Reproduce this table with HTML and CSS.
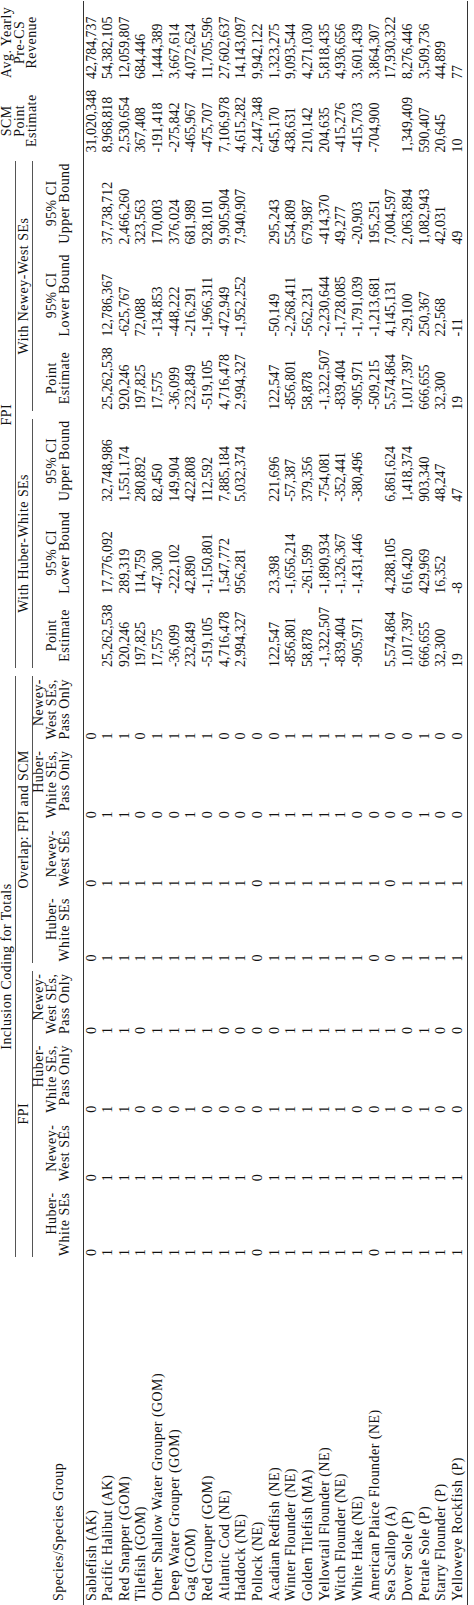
FILE: index.html
```html
<!DOCTYPE html>
<html lang="en">
<head>
<meta charset="utf-8">
<title>Inclusion coding table</title>
<link rel="stylesheet" href="styles.css">
</head>
<body>
<div class="page">
<div class="tbl">
  <div class="head">
    <div class="sub sp tl">Species/Species Group</div>
    <div class="g1 c-incl tl"><span class="tx">Inclusion Coding for Totals</span><i class="cm"></i></div>
    <div class="g1 c-fpi1 tl"><span class="tx">FPI</span><i class="cm"></i></div>
    <div class="top c-scm tl">SCM<br>Point<br>Estimate</div>
    <div class="top c-rev tl">Avg. Yearly<br>Pre-CS<br>Revenue</div>
    <div class="g2 c-fpi2 tl"><span class="tx">FPI</span><i class="cm"></i></div>
    <div class="g2 c-ovl tl"><span class="tx">Overlap: FPI and SCM</span><i class="cm"></i></div>
    <div class="g2 c-hw tl"><span class="tx">With Huber-White SEs</span><i class="cm"></i></div>
    <div class="g2 c-nw tl"><span class="tx">With Newey-West SEs</span><i class="cm"></i></div>
    <div class="sub code tl"><span class="ln">Huber-<br>White SEs</span></div>
    <div class="sub code tl"><span class="ln">Newey-<br>West SEs</span></div>
    <div class="sub code tl"><span class="ln">Huber-<br>White SEs,<br>Pass Only</span></div>
    <div class="sub code tl"><span class="ln">Newey-<br>West SEs,<br>Pass Only</span></div>
    <div class="sub code tl"><span class="ln">Huber-<br>White SEs</span></div>
    <div class="sub code tl"><span class="ln">Newey-<br>West SEs</span></div>
    <div class="sub code tl"><span class="ln">Huber-<br>White SEs,<br>Pass Only</span></div>
    <div class="sub code tl"><span class="ln">Newey-<br>West SEs,<br>Pass Only</span></div>
    <div class="sub num tl">Point<br>Estimate</div>
    <div class="sub num tl">95% CI<br>Lower Bound</div>
    <div class="sub num tl">95% CI<br>Upper Bound</div>
    <div class="sub num tl">Point<br>Estimate</div>
    <div class="sub num tl">95% CI<br>Lower Bound</div>
    <div class="sub num tl">95% CI<br>Upper Bound</div>
  </div>
  <div class="midrule"></div>
  <div class="body">
    <div class="row"><span class="tl">Sablefish (AK)</span><span>0</span><span>0</span><span>0</span><span>0</span><span>0</span><span>0</span><span>0</span><span>0</span><span></span><span></span><span></span><span></span><span></span><span></span><span>31,020,348</span><span>42,784,737</span></div>
    <div class="row"><span class="tl">Pacific Halibut (AK)</span><span>1</span><span>1</span><span>1</span><span>1</span><span>1</span><span>1</span><span>1</span><span>1</span><span>25,262,538</span><span>17,776,092</span><span>32,748,986</span><span>25,262,538</span><span>12,786,367</span><span>37,738,712</span><span>8,968,818</span><span>54,382,105</span></div>
    <div class="row"><span class="tl">Red Snapper (GOM)</span><span>1</span><span>1</span><span>1</span><span>1</span><span>1</span><span>1</span><span>1</span><span>1</span><span>920,246</span><span>289,319</span><span>1,551,174</span><span>920,246</span><span>-625,767</span><span>2,466,260</span><span>2,530,654</span><span>12,059,807</span></div>
    <div class="row"><span class="tl">Tilefish (GOM)</span><span>1</span><span>1</span><span>0</span><span>0</span><span>1</span><span>1</span><span>0</span><span>0</span><span>197,825</span><span>114,759</span><span>280,892</span><span>197,825</span><span>72,088</span><span>323,563</span><span>367,408</span><span>684,446</span></div>
    <div class="row"><span class="tl">Other Shallow Water Grouper (GOM)</span><span>1</span><span>1</span><span>0</span><span>1</span><span>1</span><span>1</span><span>0</span><span>1</span><span>17,575</span><span>-47,300</span><span>82,450</span><span>17,575</span><span>-134,853</span><span>170,003</span><span>-191,418</span><span>1,444,389</span></div>
    <div class="row"><span class="tl">Deep Water Grouper (GOM)</span><span>1</span><span>1</span><span>0</span><span>1</span><span>1</span><span>1</span><span>0</span><span>1</span><span>-36,099</span><span>-222,102</span><span>149,904</span><span>-36,099</span><span>-448,222</span><span>376,024</span><span>-275,842</span><span>3,667,614</span></div>
    <div class="row"><span class="tl">Gag (GOM)</span><span>1</span><span>1</span><span>1</span><span>1</span><span>1</span><span>1</span><span>1</span><span>1</span><span>232,849</span><span>42,890</span><span>422,808</span><span>232,849</span><span>-216,291</span><span>681,989</span><span>-465,967</span><span>4,072,624</span></div>
    <div class="row"><span class="tl">Red Grouper (GOM)</span><span>1</span><span>1</span><span>0</span><span>1</span><span>1</span><span>1</span><span>0</span><span>1</span><span>-519,105</span><span>-1,150,801</span><span>112,592</span><span>-519,105</span><span>-1,966,311</span><span>928,101</span><span>-475,707</span><span>11,705,596</span></div>
    <div class="row"><span class="tl">Atlantic Cod (NE)</span><span>1</span><span>1</span><span>0</span><span>0</span><span>1</span><span>1</span><span>0</span><span>0</span><span>4,716,478</span><span>1,547,772</span><span>7,885,184</span><span>4,716,478</span><span>-472,949</span><span>9,905,904</span><span>7,106,978</span><span>27,602,637</span></div>
    <div class="row"><span class="tl">Haddock (NE)</span><span>1</span><span>1</span><span>0</span><span>0</span><span>1</span><span>1</span><span>0</span><span>0</span><span>2,994,327</span><span>956,281</span><span>5,032,374</span><span>2,994,327</span><span>-1,952,252</span><span>7,940,907</span><span>4,615,282</span><span>14,143,097</span></div>
    <div class="row"><span class="tl">Pollock (NE)</span><span>0</span><span>0</span><span>0</span><span>0</span><span>0</span><span>0</span><span>0</span><span>0</span><span></span><span></span><span></span><span></span><span></span><span></span><span>2,447,348</span><span>9,942,122</span></div>
    <div class="row"><span class="tl">Acadian Redfish (NE)</span><span>1</span><span>1</span><span>1</span><span>0</span><span>1</span><span>1</span><span>1</span><span>0</span><span>122,547</span><span>23,398</span><span>221,696</span><span>122,547</span><span>-50,149</span><span>295,243</span><span>645,170</span><span>1,323,275</span></div>
    <div class="row"><span class="tl">Winter Flounder (NE)</span><span>1</span><span>1</span><span>1</span><span>1</span><span>1</span><span>1</span><span>1</span><span>1</span><span>-856,801</span><span>-1,656,214</span><span>-57,387</span><span>-856,801</span><span>-2,268,411</span><span>554,809</span><span>438,631</span><span>9,093,544</span></div>
    <div class="row"><span class="tl">Golden Tilefish (MA)</span><span>1</span><span>1</span><span>1</span><span>1</span><span>1</span><span>1</span><span>1</span><span>1</span><span>58,878</span><span>-261,599</span><span>379,356</span><span>58,878</span><span>-562,231</span><span>679,987</span><span>210,142</span><span>4,271,030</span></div>
    <div class="row"><span class="tl">Yellowtail Flounder (NE)</span><span>1</span><span>1</span><span>1</span><span>1</span><span>1</span><span>1</span><span>1</span><span>1</span><span>-1,322,507</span><span>-1,890,934</span><span>-754,081</span><span>-1,322,507</span><span>-2,230,644</span><span>-414,370</span><span>204,635</span><span>5,818,435</span></div>
    <div class="row"><span class="tl">Witch Flounder (NE)</span><span>1</span><span>1</span><span>1</span><span>1</span><span>1</span><span>1</span><span>1</span><span>1</span><span>-839,404</span><span>-1,326,367</span><span>-352,441</span><span>-839,404</span><span>-1,728,085</span><span>49,277</span><span>-415,276</span><span>4,936,656</span></div>
    <div class="row"><span class="tl">White Hake (NE)</span><span>1</span><span>1</span><span>0</span><span>1</span><span>1</span><span>1</span><span>0</span><span>1</span><span>-905,971</span><span>-1,431,446</span><span>-380,496</span><span>-905,971</span><span>-1,791,039</span><span>-20,903</span><span>-415,703</span><span>3,601,439</span></div>
    <div class="row"><span class="tl">American Plaice Flounder (NE)</span><span>0</span><span>1</span><span>0</span><span>1</span><span>0</span><span>1</span><span>0</span><span>1</span><span></span><span></span><span></span><span>-509,215</span><span>-1,213,681</span><span>195,251</span><span>-704,900</span><span>3,864,307</span></div>
    <div class="row"><span class="tl">Sea Scallop (A)</span><span>1</span><span>1</span><span>1</span><span>1</span><span>0</span><span>0</span><span>0</span><span>0</span><span>5,574,864</span><span>4,288,105</span><span>6,861,624</span><span>5,574,864</span><span>4,145,131</span><span>7,004,597</span><span></span><span>17,930,322</span></div>
    <div class="row"><span class="tl">Dover Sole (P)</span><span>1</span><span>1</span><span>0</span><span>0</span><span>1</span><span>1</span><span>0</span><span>0</span><span>1,017,397</span><span>616,420</span><span>1,418,374</span><span>1,017,397</span><span>-29,100</span><span>2,063,894</span><span>1,349,409</span><span>8,276,446</span></div>
    <div class="row"><span class="tl">Petrale Sole (P)</span><span>1</span><span>1</span><span>1</span><span>1</span><span>1</span><span>1</span><span>1</span><span>1</span><span>666,655</span><span>429,969</span><span>903,340</span><span>666,655</span><span>250,367</span><span>1,082,943</span><span>590,407</span><span>3,509,736</span></div>
    <div class="row"><span class="tl">Starry Flounder (P)</span><span>1</span><span>1</span><span>0</span><span>0</span><span>1</span><span>1</span><span>0</span><span>0</span><span>32,300</span><span>16,352</span><span>48,247</span><span>32,300</span><span>22,568</span><span>42,031</span><span>20,645</span><span>44,899</span></div>
    <div class="row"><span class="tl">Yelloweye Rockfish (P)</span><span>1</span><span>1</span><span>0</span><span>0</span><span>1</span><span>1</span><span>0</span><span>0</span><span>19</span><span>-8</span><span>47</span><span>19</span><span>-11</span><span>49</span><span>10</span><span>77</span></div>
  </div>
  <div class="botrule"></div>
</div>
</div>
</body>
</html>
```

FILE: styles.css
```css
:root {
  --cols: 345px 74.76px 68.64px 78.62px 72.51px 74.76px 68.64px 78.62px 72.51px 73.33px 92px 92px 73.33px 92px 92px 73.33px 83.4px;
}

html, body {
  margin: 0;
  padding: 0;
  background: #ffffff;
}

.page {
  width: 474px;
  height: 1605px;
  overflow: hidden;
}

.tbl {
  width: 1605.45px;
  transform-origin: 0 0;
  transform: translate(0, 1606px) rotate(-90deg);
  font-family: "Liberation Serif", "Times New Roman", serif;
  font-size: 13.9px;
  color: #111111;
  white-space: nowrap;
}

.tl {
  letter-spacing: 0.5px;
}

.head {
  display: grid;
  grid-template-columns: var(--cols);
  grid-template-rows: 15.5px 17px 50px;
}

.g1, .g2 {
  display: flex;
  flex-direction: column;
  justify-content: space-between;
  text-align: center;
  grid-row: 1;
}

.g1 .tx {
  line-height: 14.5px;
}

.g2 {
  grid-row: 2;
}

.g2 .tx {
  line-height: 16px;
}

.cm {
  display: block;
  flex: none;
  height: 1px;
  background: #555555;
  margin: 0 4px;
}

.c-incl { grid-column: 2 / span 8; }
.c-fpi1 { grid-column: 10 / span 6; }
.c-fpi2 { grid-column: 2 / span 4; }
.c-ovl { grid-column: 6 / span 4; }
.c-hw { grid-column: 10 / span 3; }
.c-nw { grid-column: 13 / span 3; }

.top {
  grid-row: 1 / 4;
  text-align: center;
  line-height: 12.6px;
  padding: 1px 5px 0;
}

.c-scm { grid-column: 16; }
.c-rev { grid-column: 17; }

.sub {
  grid-row: 3;
  display: flex;
  flex-direction: column;
  justify-content: flex-end;
  padding: 0 5px 11.4px;
  line-height: 12.6px;
}

.sub.sp {
  grid-column: 1;
  padding-bottom: 16.9px;
}

.sub.code .ln {
  align-self: flex-start;
  text-align: right;
}

.sub.num {
  text-align: center;
}

.midrule {
  height: 1px;
  background: #333333;
}

.row {
  display: grid;
  grid-template-columns: var(--cols);
  height: 16.67px;
  line-height: 15px;
}

.row > span {
  padding: 0 5px;
}

.botrule {
  height: 1.4px;
  background: #333333;
}
```
